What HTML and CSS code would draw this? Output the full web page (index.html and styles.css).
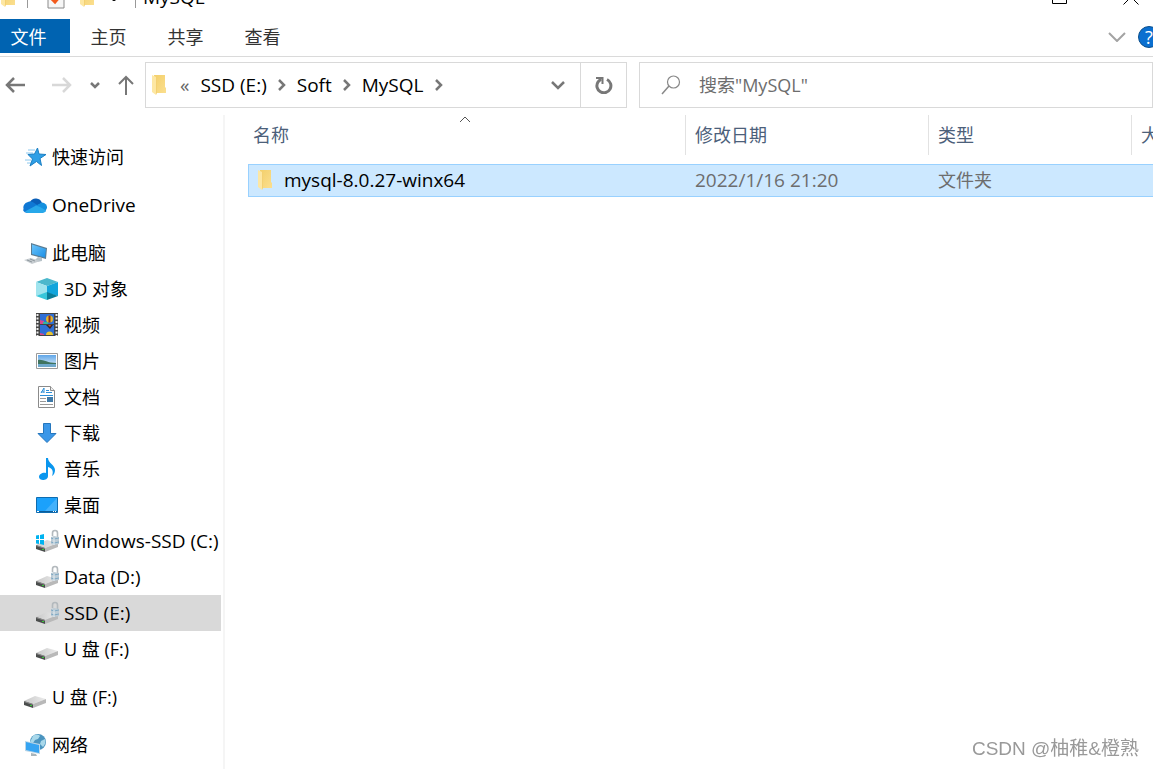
FILE: index.html
```html
<!DOCTYPE html>
<html lang="zh-CN">
<head>
  <meta charset="UTF-8">
  <meta name="viewport" content="width=device-width, initial-scale=1.0">
  <title>MySQL</title>
  <link rel="stylesheet" href="styles.css">
</head>
<body>
  <svg class="defs" aria-hidden="true">
    <defs>
      <linearGradient id="gFolder" x1="0" y1="0" x2="1" y2="1">
        <stop offset="0" stop-color="#f3cf6a"/><stop offset="1" stop-color="#fbdf8f"/>
      </linearGradient>
      <linearGradient id="gBlue" x1="0" y1="0" x2="1" y2="1">
        <stop offset="0" stop-color="#6ac4fb"/><stop offset="1" stop-color="#1b8fe6"/>
      </linearGradient>
      <linearGradient id="gDrive" x1="0" y1="0" x2="1" y2="0">
        <stop offset="0" stop-color="#c9c9c9"/><stop offset="1" stop-color="#ececec"/>
      </linearGradient>
      <linearGradient id="gSky" x1="0" y1="0" x2="0" y2="1">
        <stop offset="0" stop-color="#5fa6e8"/><stop offset="1" stop-color="#e8f4fb"/>
      </linearGradient>
    </defs>
    <symbol id="folder" viewBox="0 0 16 22">
      <path d="M3 1h11v12l1 1v5H4z" fill="url(#gFolder)"/>
      <path d="M1 1l4 2v18l-4-3z" fill="#fde7a3"/>
      <path d="M5 3v18l1-2V4z" fill="#f3d072"/>
    </symbol>
    <symbol id="drive" viewBox="0 0 24 24">
      <path d="M1 16l11-5 11 3-13 5z" fill="url(#gDrive)"/>
      <path d="M10 19l13-5v4l-13 5z" fill="#b9b9b9"/>
      <path d="M1 16l9 3v4l-9-3z" fill="#4a4d4c"/>
      <path d="M1 16l9 3v1l-9-3z" fill="#8b8b8b"/>
      <path d="M7 20h2v1H7z" fill="#37c837"/>
    </symbol>
    <symbol id="lock" viewBox="0 0 24 24">
      <path d="M17.500 7V4a2.500 2.500 0 0 1 5 0v4" fill="none" stroke="#b3b9bd" stroke-width="1.600"/>
      <path d="M16 8l3-1 5 1v7l-5 1-3-1z" fill="#bccbd5"/>
      <path d="M16 9l3 1 5-1M16 13l3 1 5-1" fill="none" stroke="#7fa9c4"/>
      <path d="M19 9v7" stroke="#e8f0f4"/>
    </symbol>
  </svg>

  <header class="titlebar">
    <svg class="tb_folder" viewBox="0 0 16 22"><use href="#folder"/></svg>
    <span class="tb_sep"></span>
    <button class="tb_check" type="button" aria-label="属性">
      <svg viewBox="0 0 18 24"><path d="M1 1h16v22H1z" fill="#f6f6f6" stroke="#8a8a8a"/><path d="M4 13l4 4 6-7" fill="none" stroke="#f25a1c" stroke-width="3"/></svg>
    </button>
    <svg class="tb_folder" viewBox="0 0 16 22"><use href="#folder"/></svg>
    <button class="tb_more" type="button" aria-label="自定义快速访问工具栏">
      <svg viewBox="0 0 10 8"><path d="M0 0h10v3L6 8H4L0 3z" fill="#111"/></svg>
    </button>
    <span class="tb_sep"></span>
    <h1>MySQL</h1>
    <div class="win_btns">
      <button type="button" aria-label="最大化"><svg viewBox="0 0 16 16"><path d="M.5.500h14v14H.5z" fill="none" stroke="#000"/></svg></button>
      <button type="button" aria-label="关闭"><svg viewBox="0 0 16 16"><path d="M.5.500l15 15M15.500.500l-15 15" stroke="#000" fill="none"/></svg></button>
    </div>
  </header>

  <nav class="ribbon">
    <button class="active" type="button">文件</button>
    <button type="button">主页</button>
    <button type="button">共享</button>
    <button type="button">查看</button>
    <button class="expand" type="button" aria-label="展开功能区">
      <svg viewBox="0 0 18 10"><path d="M1 1l8 8 8-8" fill="none" stroke="#a3a3a3" stroke-width="2"/></svg>
    </button>
    <button class="help" type="button" aria-label="帮助">?</button>
  </nav>

  <div class="toolbar">
    <div class="history">
      <button class="back" type="button" aria-label="后退"><svg viewBox="0 0 20 16"><path d="M20 8H2M9 1L2 8l7 7" fill="none" stroke="#777" stroke-width="2.500"/></svg></button>
      <button class="next" type="button" aria-label="前进"><svg viewBox="0 0 20 16"><path d="M0 8h18M11 1l7 7-7 7" fill="none" stroke="#d8d8d8" stroke-width="2.500"/></svg></button>
      <button class="recent" type="button" aria-label="最近位置"><svg viewBox="0 0 10 8"><path d="M1 2l4 4 4-4" fill="none" stroke="#777" stroke-width="2.500"/></svg></button>
      <button class="up" type="button" aria-label="上移"><svg viewBox="0 0 16 20"><path d="M8 20V2M1 9l7-7 7 7" fill="none" stroke="#777" stroke-width="2"/></svg></button>
    </div>
    <div class="address">
      <svg class="addr_folder" viewBox="0 0 16 22"><use href="#folder"/></svg>
      <span class="dots">«</span>
      <a href="#">SSD (E:)</a>
      <svg class="arrow" viewBox="0 0 8 12"><path d="M1 1l5 5-5 5" fill="none" stroke="#777" stroke-width="2.500"/></svg>
      <a href="#">Soft</a>
      <svg class="arrow" viewBox="0 0 8 12"><path d="M1 1l5 5-5 5" fill="none" stroke="#777" stroke-width="2.500"/></svg>
      <a href="#">MySQL</a>
      <svg class="arrow" viewBox="0 0 8 12"><path d="M1 1l5 5-5 5" fill="none" stroke="#777" stroke-width="2.500"/></svg>
      <button class="drop" type="button" aria-label="以前的位置"><svg viewBox="0 0 14 10"><path d="M1 2l6 6 6-6" fill="none" stroke="#777" stroke-width="2.500"/></svg></button>
      <button class="refresh" type="button" aria-label="刷新"><svg viewBox="0 0 18 18"><path d="M12 3.500A7 7 0 1 1 3 6l3-3" fill="none" stroke="#777" stroke-width="3"/><path d="M1 2h6.500v6" fill="none" stroke="#777" stroke-width="2"/></svg></button>
    </div>
    <label class="search">
      <svg viewBox="0 0 20 20"><circle cx="12.500" cy="7" r="6" fill="none" stroke="#888" stroke-width="1.200"/><path d="M8 11l-7 8" stroke="#888" stroke-width="1.500"/></svg>
      <input type="text" placeholder="搜索&quot;MySQL&quot;" aria-label="搜索">
    </label>
  </div>

  <main>
    <nav class="tree">
      <ul>
        <li><a href="#">
          <svg viewBox="0 0 24 24"><path d="M5 5h7M3 8h7M2 15h6M4 18h4" stroke="#8cc8ee"/><path d="M14.500 3l1.500 6 7 .500-6 4 1.500 7-5-4L7 21l2.500-7L5 9.500l6.500-.500z" fill="#2e9fe6" stroke="#1a7fc4"/></svg>
          <span>快速访问</span></a></li>
      </ul>
      <ul>
        <li><a href="#">
          <svg viewBox="0 0 24 24"><path d="M7 9a6.500 6.500 0 0 1 12 1l-7 4z" fill="#0a5fb8"/><path d="M1 17A5.500 5.500 0 0 1 5 9c3-1 5 0 7 1.500L17 14l-12 6C3 20 0 19 0 16z" fill="#0f78d4"/><path d="M12 13l7-3.500a5 5 0 0 1 5 5.500l-2 4z" fill="#1490df"/><path d="M2 18.500L13 12.500c3 1 8 3 10 5.500a5 5 0 0 1-3 2H5c-1 0-2-.500-3-1.500z" fill="#28a8ea"/></svg>
          <span class="en">OneDrive</span></a></li>
      </ul>
      <ul>
        <li><a href="#">
          <svg viewBox="0 0 24 24"><path d="M8 2l16 5-1 11-15-4z" fill="#5b7c92"/><path d="M9 3.500L23 8l-1 8.500L9 13z" fill="url(#gBlue)"/><path d="M15 16l4 1v3l-5 1-2-2z" fill="#b8c3c9"/><path d="M1 19l7-2 9 3-8 3z" fill="#c7cdd1"/><path d="M4 19l5 2M7 18l5 2" stroke="#8e979d"/></svg>
          <span>此电脑</span></a></li>
        <li class="sub"><a href="#">
          <svg viewBox="0 0 24 24"><path d="M12 1l11 4-11 4L1 5z" fill="#4bb8cc"/><path d="M1 5l11 4v7L1 19z" fill="#9fe4ee"/><path d="M23 5L12 9v7l11 3z" fill="#12a5dc"/><path d="M1 19l11-4v8z" fill="#38c6da"/><path d="M23 19l-11-4v8z" fill="#0b7d98"/></svg>
          <span class="mix">3D 对象</span></a></li>
        <li class="sub"><a href="#">
          <svg viewBox="0 0 24 24"><path d="M1 0h22v23H1z" fill="#444"/><path d="M2.500 1v22M21.500 1v22" stroke="#eee" stroke-width="2" stroke-dasharray="2 1.500"/><path d="M5 1h14v10H5zM5 12h14v10H5z" fill="#2f6fd6"/><path d="M5 7l4 1v3H5z" fill="#d8488c"/><path d="M8 9h5v2H8z" fill="#35b5a0"/><circle cx="14.500" cy="6" r="3.500" fill="#e3b52a"/><path d="M14.500 2.500v7" stroke="#8a2d20" stroke-width="2"/><path d="M11 12h7l-3 4z" fill="#3a2320"/><path d="M13 12h3l-1 2z" fill="#d94b28"/><path d="M11 22a3 3 0 0 1 7 0z" fill="#eac52e"/><path d="M5 20l4 1v1H5z" fill="#d8488c"/></svg>
          <span>视频</span></a></li>
        <li class="sub"><a href="#">
          <svg viewBox="0 0 24 24"><path d="M1.500 4.500h21v15h-21z" fill="#fff" stroke="#9a9a9a"/><path d="M3 6h18v12H3z" fill="url(#gSky)"/><path d="M3 11c5-1 9 3 18 3v1H3z" fill="#3f7460"/><path d="M3 15h18v3H3z" fill="#6fa9cc"/></svg>
          <span>图片</span></a></li>
        <li class="sub"><a href="#">
          <svg viewBox="0 0 24 24"><path d="M3.500 1.500h12l4 4v17h-16z" fill="#fff" stroke="#8b8b8b"/><path d="M15.500 1.500v4h4" fill="#eee" stroke="#8b8b8b"/><path d="M6 8l3-5v5M6 7h3M11 5.500h3M11 7.500h6M5 10.500h13" fill="none" stroke="#2c8fd8"/><path d="M5 13.500h6M5 16.500h6M5 19.500h13" stroke="#999"/><path d="M12 12h6v5h-6z" fill="#3e79a8"/></svg>
          <span>文档</span></a></li>
        <li class="sub"><a href="#">
          <svg viewBox="0 0 24 24"><path d="M8.500 2.500h7v10h5.500l-9 9-9-9h5.500z" fill="#3b97e8" stroke="#2576bd"/></svg>
          <span>下载</span></a></li>
        <li class="sub"><a href="#">
          <svg viewBox="0 0 24 24"><path d="M11 1h2c0 5 7 7 7 12 0 2-1 5-3 6 2-5 0-8-4-9v9c0 3-3 4-5 4s-4-1-4-3c0-3 4-5 7-4z" fill="#0a96ee"/></svg>
          <span>音乐</span></a></li>
        <li class="sub"><a href="#">
          <svg viewBox="0 0 24 24"><path d="M1.500 4.500h21v15h-21z" fill="#1ba1fb" stroke="#0e6cb0"/><path d="M22 5v13H10z" fill="#43b1fb"/><path d="M2 18.500h20" stroke="#0b5c99"/><path d="M2 18.500h2M18 18.500h1M20 18.500h1" stroke="#fff"/></svg>
          <span>桌面</span></a></li>
        <li class="sub"><a href="#">
          <svg viewBox="0 0 24 24"><use href="#drive"/><use href="#lock"/><path d="M1 6.500l3-.500v4H1zM5 6l4-1v5H5zM1 11h3v4l-3-.500zM5 11h4v5l-4-1z" fill="#00b3f0"/></svg>
          <span class="en">Windows-SSD (C:)</span></a></li>
        <li class="sub"><a href="#">
          <svg viewBox="0 0 24 24"><use href="#drive"/><use href="#lock"/></svg>
          <span class="en">Data (D:)</span></a></li>
        <li class="sub active"><a href="#">
          <svg viewBox="0 0 24 24"><use href="#drive"/><use href="#lock"/></svg>
          <span class="en">SSD (E:)</span></a></li>
        <li class="sub"><a href="#">
          <svg viewBox="0 0 24 24"><use href="#drive"/></svg>
          <span>U 盘 (F:)</span></a></li>
      </ul>
      <ul>
        <li><a href="#">
          <svg viewBox="0 0 24 24"><use href="#drive"/></svg>
          <span>U 盘 (F:)</span></a></li>
      </ul>
      <ul>
        <li><a href="#">
          <svg viewBox="0 0 24 24"><circle cx="15" cy="9" r="8" fill="#4a94bf"/><path d="M10 3c3-2 6-1 7 0l-2 3-3 1-2 3-3-1zM18 8l4-2c1 3 0 6-2 8l-3-3z" fill="#a8d8ea"/><path d="M2 8l15 3v10L2 18z" fill="#b9d6e8"/><path d="M3 9l13 3v8L3 17z" fill="#35a4f2"/><path d="M8 20l5 1 1 2H8z" fill="#a9b5bb"/></svg>
          <span>网络</span></a></li>
      </ul>
    </nav>

    <section class="files">
      <table>
        <colgroup>
          <col class="c_name"><col class="c_date"><col class="c_type"><col>
        </colgroup>
        <thead>
          <tr>
            <th><div>名称</div><svg class="sort" viewBox="0 0 12 7"><path d="M1 6l5-5 5 5" fill="none" stroke="#555"/></svg></th>
            <th><div>修改日期</div></th>
            <th><div>类型</div></th>
            <th><div>大小</div></th>
          </tr>
        </thead>
        <tbody>
          <tr>
            <td><div class="name en"><svg viewBox="0 0 16 22"><use href="#folder"/></svg>mysql-8.0.27-winx64</div></td>
            <td class="en">2022/1/16 21:20</td>
            <td>文件夹</td>
            <td></td>
          </tr>
        </tbody>
      </table>
    </section>
  </main>

  <div class="watermark">CSDN @柚稚&amp;橙熟</div>
</body>
</html>
```
FILE: styles.css
```css
* {
  box-sizing: border-box;
}
body {
  margin: 0;
  min-height: 100vh;
  display: flex;
  flex-direction: column;
  overflow: hidden;
  background: #fff;
  color: #000;
  font: 18px/24px "Open Sans", "Noto Sans CJK SC", sans-serif;
}
button, input {
  font: inherit;
  color: inherit;
  border: 0;
  padding: 0;
  margin: 0;
  background: none;
}
a {
  color: inherit;
  text-decoration: none;
}
svg {
  display: block;
  flex: none;
}
ul {
  list-style: none;
  margin: 0;
  padding: 0;
}
.defs {
  position: absolute;
  width: 0;
  height: 0;
}
.en {
  font-size: 19px;
}

/* title bar, scrolled partly off the top */
.titlebar {
  height: 44px;
  margin-top: -25px;
  display: flex;
  align-items: center;
}
.titlebar h1 {
  margin: 0 0 0 7px;
  font-size: 19px;
  font-weight: 400;
}
.tb_folder {
  width: 16px;
  height: 22px;
}
.tb_sep {
  width: 1px;
  height: 22px;
  background: #999;
  margin-left: 11px;
}
.tb_check {
  margin: 0 14px 0 19px;
}
.tb_check svg {
  width: 18px;
  height: 24px;
}
.tb_more {
  margin: 0 5px 0 14px;
}
.tb_more svg {
  width: 10px;
  height: 8px;
}
.win_btns {
  margin-left: auto;
  display: flex;
  gap: 55px;
  padding-right: 14px;
}
.win_btns svg {
  width: 16px;
  height: 16px;
}

.ribbon {
  height: 38px;
  display: flex;
  align-items: flex-start;
  border-bottom: 1px solid #dadada;
  color: #333;
}
.ribbon button {
  height: 34px;
  width: 77px;
  flex: none;
  padding-top: 2px;
}
.ribbon .active {
  width: 70px;
  padding-right: 13px;
  background: #0063b1;
  color: #fff;
}
.ribbon .expand {
  width: 18px;
  padding: 0;
  margin: 1px 12px 0 auto;
}
.expand svg {
  width: 18px;
  height: 10px;
}
.ribbon .help {
  width: 22px;
  height: 22px;
  padding: 0;
  margin: 7px -7px 0 0;
  border-radius: 50%;
  border: 1px solid #0b4f8c;
  background: #0a6fd0;
  color: #fff;
  line-height: 20px;
}

.toolbar {
  display: flex;
  padding-top: 5px;
}
.history {
  width: 145px;
  display: flex;
  align-items: center;
  padding-left: 5px;
}
.history .back svg, .history .next svg {
  width: 20px;
  height: 16px;
}
.history .next {
  margin: 0 18px 0 27px;
}
.history .recent svg {
  width: 10px;
  height: 8px;
}
.history .up {
  margin-left: 18px;
}
.history .up svg {
  width: 16px;
  height: 20px;
}
.address {
  width: 482px;
  height: 46px;
  display: flex;
  align-items: center;
  border: 1px solid #d9d9d9;
  font-size: 19px;
}
.addr_folder {
  width: 16px;
  height: 22px;
  margin-left: 5px;
}
.dots {
  margin: 0 11px 0 13px;
  color: #666;
}
.arrow {
  width: 8px;
  height: 12px;
  margin: 0 11px;
}
.drop {
  margin-left: auto;
  padding: 0 15px;
}
.drop svg {
  width: 14px;
  height: 10px;
}
.refresh {
  width: 46px;
  align-self: stretch;
  border-left: 1px solid #d9d9d9;
}
.refresh svg {
  width: 18px;
  height: 18px;
  margin: 0 auto;
}
.search {
  flex: 1;
  display: flex;
  align-items: center;
  margin-left: 12px;
  padding-left: 21px;
  border: 1px solid #d9d9d9;
}
.search svg {
  width: 20px;
  height: 20px;
}
.search input {
  flex: 1;
  min-width: 0;
  margin-left: 18px;
  outline: 0;
}
.search input::placeholder {
  color: #6d6d6d;
  opacity: 1;
}

main {
  flex: 1;
  display: flex;
  padding-top: 7px;
}
.tree {
  width: 225px;
  flex: none;
  padding: 24px 2px 0 0;
  border-right: 2px solid #f5f5f5;
}
.tree ul + ul {
  margin-top: 12px;
}
.tree a {
  height: 36px;
  display: flex;
  align-items: center;
  gap: 5px;
  padding-left: 23px;
  white-space: nowrap;
}
.tree .sub a {
  padding-left: 35px;
}
.tree .active a {
  background: #d9d9d9;
}
.tree svg {
  width: 24px;
  height: 24px;
}

.files {
  flex: 1;
  min-width: 0;
  padding-left: 23px;
}
table {
  width: 100%;
  table-layout: fixed;
  border-spacing: 0;
}
.c_name {
  width: 437px;
}
.c_date {
  width: 243px;
}
.c_type {
  width: 203px;
}
th {
  position: relative;
  padding: 0 0 9px;
  font-weight: 400;
  text-align: left;
  white-space: nowrap;
  color: #4c607a;
}
th div {
  height: 40px;
  line-height: 40px;
  padding-left: 9px;
  border-left: 1px solid #e2e2e2;
  overflow: hidden;
}
th:first-child div {
  padding-left: 5px;
  border-left: 0;
}
.sort {
  position: absolute;
  top: 1px;
  left: 50%;
  width: 12px;
  height: 7px;
  margin-left: -8px;
}
td {
  height: 33px;
  padding: 0 0 2px 10px;
  background: #cce8ff;
  border: solid #99d1ff;
  border-width: 1px 0;
  color: #6d6d6d;
}
td:first-child {
  padding-left: 8px;
  border-left-width: 1px;
  color: #000;
}
.name {
  display: flex;
  align-items: center;
  gap: 11px;
}
.name svg {
  width: 16px;
  height: 22px;
}

.watermark {
  position: fixed;
  right: 14px;
  bottom: 8px;
  color: #999;
  font-family: "Liberation Sans", "Noto Sans CJK SC", sans-serif;
  font-size: 19px;
}
```
